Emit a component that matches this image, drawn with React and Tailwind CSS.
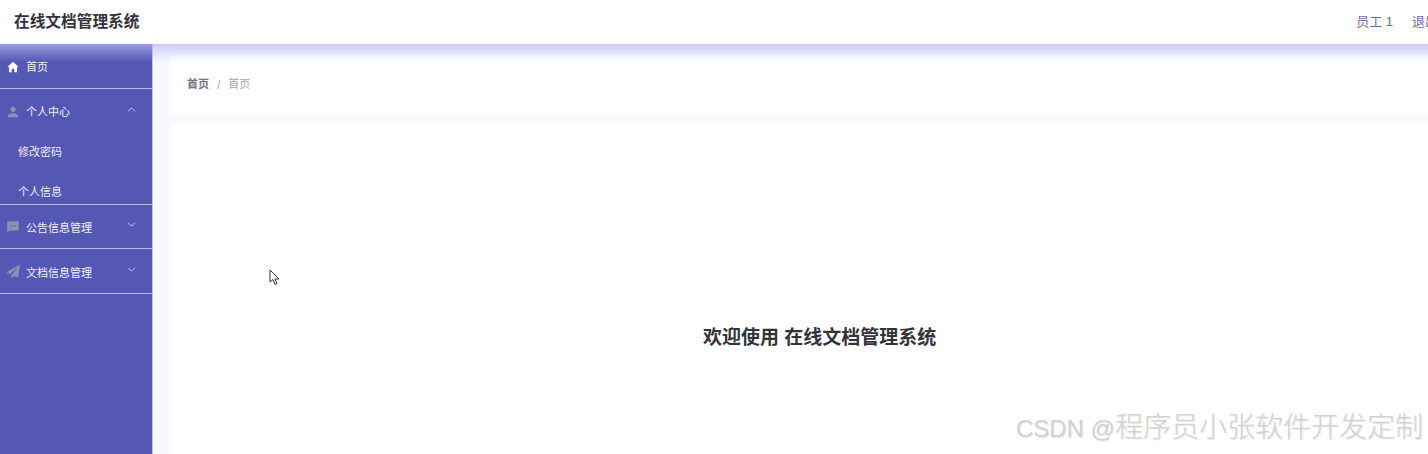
import React from 'react';
import { ChevronUp, ChevronDown } from 'lucide-react';
import { IoMdHome, IoMdPerson } from 'react-icons/io';
import { MdSms } from 'react-icons/md';
import { FaPaperPlane } from 'react-icons/fa';

const font = 'font-["Liberation_Sans","Noto_Sans_CJK_SC",sans-serif]';

const MenuRow = ({ icon: Icon, label, open, rowClass, labelClass = 'mt-[1px]', iconClass = 'w-[14px] h-[14px] text-[#8f8fb0]', hasArrow = true }) => (
  <div className={`flex items-center pl-[6px] pr-[14px] shrink-0 ${rowClass}`}>
    <span className="w-[14px] flex justify-center shrink-0 mt-[1px]">
      <Icon className={iconClass} />
    </span>
    <span className={`ml-[6px] text-[11px] text-[#f0f0fa] ${labelClass}`}>{label}</span>
    {hasArrow && (
      <span className="ml-auto -mt-[4px] text-[#e4e4f4]">
        {open ? <ChevronUp size={13} strokeWidth={1.5} /> : <ChevronDown size={13} strokeWidth={1.5} />}
      </span>
    )}
  </div>
);

const App = () => {
  return (
    <div className={`${font} relative w-[1428px] h-[454px] overflow-hidden bg-[#f8f8fe]`}>
      <div className="w-[1458px] h-full flex flex-col">
        <header className="h-[44px] shrink-0 bg-white flex items-center pl-[14px] pr-[20px]">
          <h1 className="text-[15.7px] font-bold text-[#33333f]">在线文档管理系统</h1>
          <div className="ml-auto flex items-center gap-[19px] text-[13px] text-[#6c6ca8]">
            <span>员工 1</span>
            <span>退出</span>
          </div>
        </header>

        <div className="flex-1 flex min-h-0">
          <aside className="w-[153px] shrink-0 flex flex-col bg-[#5557b4] border-r border-[#c5c5e0]">
            <MenuRow
              icon={IoMdHome}
              label="首页"
              rowClass="h-[45px] pt-[1px] border-b border-[#b9b8dc]"
              iconClass="w-[16px] h-[16px] text-white"
              hasArrow={false}
            />
            <MenuRow icon={IoMdPerson} label="个人中心" labelClass="mt-[3px]" rowClass="h-[44px]" open />
            <div className="h-[71px] shrink-0 text-[11px] text-[#ecebf8] pl-[18px]">
              <div className="h-[40px] leading-[39px]">修改密码</div>
              <div className="h-[31px] leading-[38px] overflow-hidden">个人信息</div>
            </div>
            <div className="border-t border-[#b9b8dc]">
              <MenuRow
                icon={MdSms}
                label="公告信息管理"
                labelClass="mt-[3px]"
                rowClass="h-[44px] border-b border-[#b9b8dc]"
              />
            </div>
            <MenuRow
              icon={FaPaperPlane}
              label="文档信息管理"
              labelClass="mt-[5px]"
              rowClass="h-[45px] border-b border-[#b9b8dc]"
              iconClass="w-[13px] h-[13px] text-[#8f8fb0]"
            />
          </aside>

          <main className="flex-1 min-w-0 flex flex-col pl-[18px]">
            <div className="mt-[10px] h-[61px] shrink-0 bg-white flex items-center px-[16px] text-[11px]">
              <span className="font-bold text-[#74747c]">首页</span>
              <span className="mx-[8px] text-[12px] text-[#a8a8b4]">/</span>
              <span className="text-[#a3a5b4]">首页</span>
            </div>
            <div className="mt-[8px] flex-1 bg-white pt-[201px]">
              <p className="ml-[532px] text-[19px] leading-[28px] font-bold text-[#33333b]">欢迎使用 在线文档管理系统</p>
            </div>
          </main>
        </div>
      </div>

      {/* header glow falling over the sidebar and the page */}
      <div className="absolute left-0 right-0 top-[44px] h-[18px] pointer-events-none bg-gradient-to-b from-[#b8baf4]/70 to-transparent" />

      {/* mouse pointer in the capture */}
      <svg className="absolute left-[269px] top-[269px]" width="11" height="17" viewBox="0 0 11 17">
        <path d="M1 1 L1 13 L4 10.5 L6 15.5 L8 14.5 L6 10 L10 10 Z" fill="#fff" stroke="#333" strokeWidth="1" />
      </svg>

      {/* watermark */}
      <div className="absolute right-[5px] top-[410px] text-[28px] leading-[36px] font-light text-[#d2d2d2] whitespace-nowrap [text-shadow:1px_1px_1px_#e6e6e6]">
        <span className="text-[24px]">CSDN @</span>程序员小张软件开发定制
      </div>
    </div>
  );
};

export default App;
